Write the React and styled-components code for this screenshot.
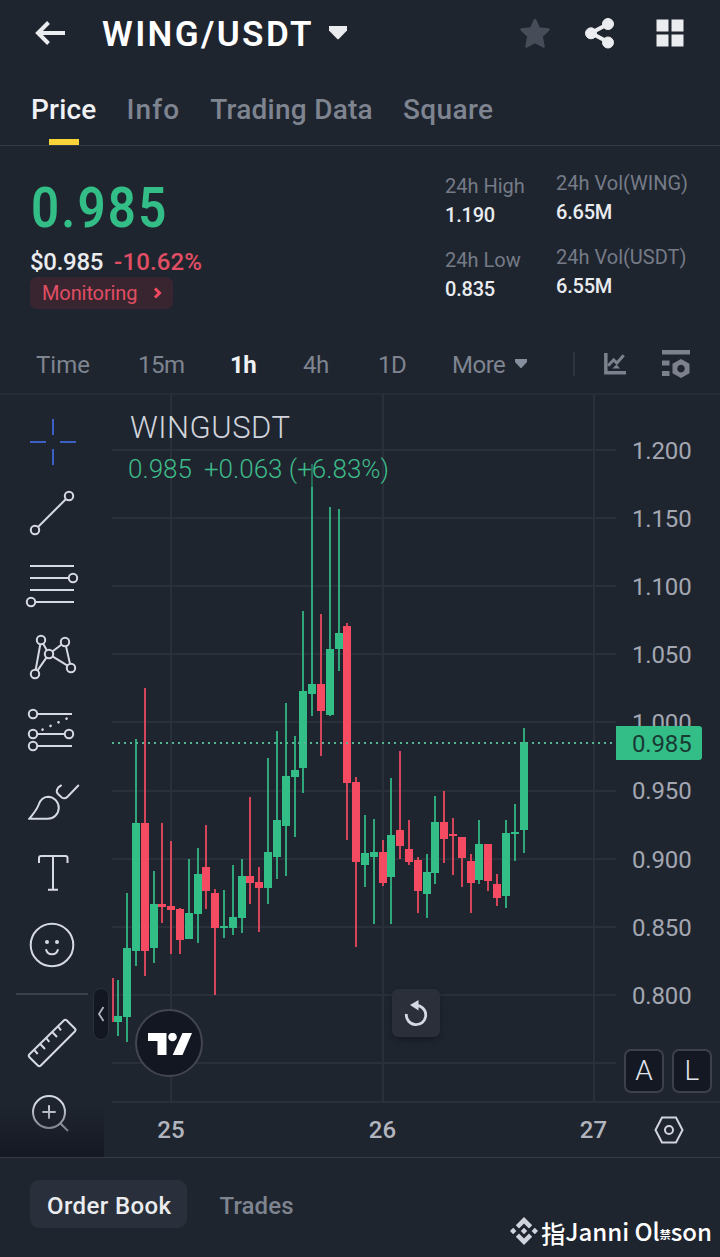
import React from "react";
import styled, { createGlobalStyle } from "styled-components";

const UP = "#34be87";
const DOWN = "#f44b62";

// [x, high, low, body top, body bottom, rising]
const candles = [
  [113, 978, 1022, 1021, 1022, 0],
  [118, 980, 1036, 1016, 1022, 1],
  [127, 893, 1042, 948, 1017, 1],
  [136, 739, 966, 823, 951, 1],
  [145, 688, 976, 823, 951, 0],
  [154, 871, 963, 904, 948, 1],
  [162, 823, 923, 904, 907, 0],
  [171, 841, 954, 906, 910, 0],
  [180, 908, 954, 909, 940, 0],
  [189, 859, 939, 913, 939, 1],
  [198, 848, 943, 874, 914, 1],
  [206, 825, 909, 867, 891, 0],
  [215, 889, 995, 893, 928, 0],
  [224, 890, 938, 926, 928, 1],
  [233, 865, 935, 917, 928, 1],
  [242, 859, 933, 876, 918, 1],
  [250, 797, 904, 876, 883, 0],
  [259, 867, 932, 882, 888, 0],
  [268, 758, 904, 852, 888, 1],
  [277, 731, 879, 820, 857, 1],
  [286, 703, 876, 776, 826, 1],
  [295, 736, 837, 770, 777, 1],
  [303, 611, 793, 691, 768, 1],
  [312, 487, 716, 684, 694, 1],
  [321, 614, 756, 684, 711, 0],
  [330, 507, 716, 649, 715, 1],
  [339, 509, 671, 633, 649, 1],
  [347, 623, 840, 626, 783, 0],
  [356, 777, 947, 782, 862, 0],
  [365, 815, 887, 853, 865, 1],
  [374, 819, 924, 852, 857, 1],
  [383, 840, 886, 852, 883, 0],
  [391, 778, 924, 835, 877, 1],
  [400, 751, 859, 830, 846, 0],
  [409, 820, 865, 849, 862, 0],
  [418, 857, 913, 860, 891, 0],
  [427, 854, 918, 872, 894, 1],
  [435, 796, 884, 822, 873, 1],
  [444, 791, 863, 822, 839, 0],
  [453, 818, 875, 834, 836, 0],
  [462, 837, 887, 837, 858, 0],
  [471, 854, 913, 861, 883, 0],
  [479, 820, 884, 844, 880, 1],
  [488, 844, 891, 844, 881, 0],
  [497, 874, 906, 884, 898, 0],
  [506, 820, 908, 833, 896, 1],
  [515, 804, 861, 832, 834, 1],
  [524, 728, 853, 742, 830, 1],
];

const gridRows = [450, 518, 586, 654, 722, 791, 859, 927, 995, 1063];
const gridCols = [171, 383, 594];
const prices = ["1.200", "1.150", "1.100", "1.050", "1.000", "0.950", "0.900", "0.850", "0.800"];

const tools = [
  {
    id: "cross",
    color: "#3c5fc4",
    art: <path d="M14 36H30M44 36H60M37 13V29M37 43V59" />,
  },
  {
    id: "trend",
    art: (
      <>
        <circle cx="53" cy="18" r="4.2" />
        <circle cx="19" cy="52" r="4.2" />
        <path d="M22 49L50 21" />
      </>
    ),
  },
  {
    id: "fib",
    art: (
      <>
        <path d="M14 16H58M14 28H53M14 40H58M19 52H58" />
        <circle cx="57" cy="28" r="4.2" />
        <circle cx="15" cy="52" r="4.2" />
      </>
    ),
  },
  {
    id: "pattern",
    art: (
      <>
        <circle cx="25" cy="18" r="4.2" />
        <circle cx="49" cy="20" r="4.2" />
        <circle cx="33" cy="32" r="4.2" />
        <circle cx="55" cy="46" r="4.2" />
        <circle cx="19" cy="52" r="4.2" />
        <path d="M27 21.6L31 28.4M36.4 29.5L45.6 22.5M50 24.1L54 41.9M36.5 34.3L51.5 43.7M30.6 35.4L21.4 48.6M24.3 22.2L19.7 47.8" />
      </>
    ),
  },
  {
    id: "forecast",
    art: (
      <>
        <circle cx="17" cy="20" r="4.2" />
        <circle cx="17" cy="40" r="4.2" />
        <circle cx="17" cy="52" r="4.2" />
        <circle cx="53" cy="40" r="4.2" />
        <path d="M21 20H56M21 40H49M21 52H56" />
        <path d="M26.5 35.6L53 23.5" strokeDasharray="0.1 8.7" strokeLinecap="round" strokeWidth="2.6" />
      </>
    ),
  },
  {
    id: "brush",
    art: (
      <path
        d="M13 52.7H31.5A11 11 0 1 0 32 30.7C26.5 31 24 34.5 22.5 39C20.5 44.5 17 48 13.5 52.5M45 19.5C41 21.5 39.500 25.500 42 28L45.500 31.200C48 33.200 49.500 32.700 51.500 30.700L62.300 19.500"
        strokeLinecap="round"
      />
    ),
  },
  {
    id: "text",
    art: <path d="M23 25V20Q23 18 25 18H49.5Q51.5 18 51.5 20V25M37 18V51.7M32 51.7H42" />,
  },
  {
    id: "smile",
    art: (
      <>
        <circle cx="36" cy="35" r="21.3" />
        <circle cx="31" cy="32" r="2" fill="#d6d9e1" stroke="none" />
        <circle cx="41" cy="32" r="2" fill="#d6d9e1" stroke="none" />
        <path d="M30 39.3Q31 44.3 36 44.3Q41 44.3 42 39.3" />
      </>
    ),
  },
];

const lowerTools = [
  {
    id: "ruler",
    art: (
      <path
        d="M47.8 14.5Q49.3 13 50.8 14.5L58.8 22.5Q60.3 24 58.8 25.5L24.8 59.5Q23.3 61 21.8 59.5L13.500 51.200Q12 49.700 13.500 48.200ZM18 43.700L21.700 48M24 37.700L29 43M30 31.700L33.300 36M36 25.700L41 31M41.700 20L45 24.300"
        strokeLinejoin="round"
      />
    ),
  },
  {
    id: "zoom",
    art: (
      <>
        <circle cx="33" cy="34" r="16" />
        <path d="M26.3 34H39.7M33 27.3V40.7M44.5 45.5L52 53" />
      </>
    ),
  },
];

function Tool({ item }) {
  return (
    <ToolButton aria-label={item.id} $color={item.color}>
      <svg width="72" height="72" viewBox="0 0 72 72" fill="none" stroke="currentColor" strokeWidth="2">
        {item.art}
      </svg>
    </ToolButton>
  );
}

function Header() {
  return (
    <HeaderBar>
      <svg width="32" height="26" viewBox="0 0 32 26" fill="none" stroke="#eaecef" strokeWidth="4">
        <path d="M14.5 2.5L4 13L14.5 23.5M3 13H31" />
      </svg>
      <Pair>WING/USDT</Pair>
      <svg width="20" height="16" viewBox="0 0 20 16" fill="#eaecef">
        <path d="M1 1H19V5.5L10.5 14.3H9.5L1 5.5Z" />
      </svg>
      <HeaderActions>
        <svg width="32" height="32" viewBox="0 0 32 32" fill="#474d58" stroke="#474d58" strokeWidth="2.5" strokeLinejoin="round">
          <path d="M16 3L20 11.5L29.5 12.5L22.6 19.2L24.5 29.5L16 25L7.5 29.5L9.4 19.2L2.5 12.5L12 11.5Z" />
        </svg>
        <svg width="30" height="32" viewBox="0 0 30 32" fill="#eaecef" stroke="#eaecef">
          <path d="M24 7L7 16L24 25" fill="none" strokeWidth="4" />
          <circle cx="24" cy="7" r="5.5" />
          <circle cx="7" cy="16.3" r="5.5" />
          <circle cx="24" cy="25.5" r="5.5" />
        </svg>
        <svg width="28" height="28" viewBox="0 0 28 28" fill="#eaecef">
          <path d="M.5 .5H12.5V12.5H.5ZM15.5 .5H27.5V12.5H15.5ZM.5 15.5H12.5V27.5H.5ZM15.5 15.5H27.5V27.5H15.5Z" />
        </svg>
      </HeaderActions>
    </HeaderBar>
  );
}

function Summary() {
  return (
    <SummaryBox>
      <PriceColumn>
        <LastPrice>0.985</LastPrice>
        <SubPrice>
          <span>$0.985</span>
          <Change>-10.62%</Change>
        </SubPrice>
        <Badge>
          Monitoring
          <svg width="10" height="14" viewBox="0 0 10 14" fill="none" stroke={DOWN} strokeWidth="3">
            <path d="M2 2.5L6.5 7L2 11.5" />
          </svg>
        </Badge>
      </PriceColumn>
      <StatColumn $top={28} $width={111}>
        <StatLabel>24h High</StatLabel>
        <StatValue>1.190</StatValue>
        <StatLabel>24h Low</StatLabel>
        <StatValue>0.835</StatValue>
      </StatColumn>
      <StatColumn $top={25} $width={164}>
        <StatLabel>24h Vol(WING)</StatLabel>
        <StatValue>6.65M</StatValue>
        <StatLabel>24h Vol(USDT)</StatLabel>
        <StatValue>6.55M</StatValue>
      </StatColumn>
    </SummaryBox>
  );
}

function Intervals() {
  return (
    <IntervalBar>
      <Interval $w={102} $ls={0}>Time</Interval>
      <Interval $w={92}>15m</Interval>
      <Interval $w={73} $active>1h</Interval>
      <Interval $w={75}>4h</Interval>
      <Interval $w={74}>1D</Interval>
      <Interval $w={121}>
        More
        <svg width="14" height="12" viewBox="0 0 14 12" fill="#848e9c">
          <path d="M1 0H13V3L7.5 9H6.5L1 3Z" />
        </svg>
      </Interval>
      <Split />
      <svg width="22" height="22" viewBox="0 0 24 24" fill="none" stroke="#7c818d" strokeWidth="3.8">
        <path d="M2 0V21.500H24" />
        <path d="M4.500 14L10.500 7.500L14 11L21.500 2.500" strokeWidth="3.200" />
        <path d="M9 17L13.500 12.500L17.500 17Z" fill="#7c818d" stroke="none" />
      </svg>
      <SettingsIcon width="30" height="30" viewBox="0 0 30 30" fill="#7c818d">
        <path d="M1 1H29V5.5H1ZM1 11.5H8.5V16.5H1ZM1 22H8.5V27H1Z" />
        <path fillRule="evenodd" d="M20 10L28.5 14.8V24.2L20 29L11.5 24.2V14.8ZM20 15.8A3.8 3.8 0 1 0 20.01 15.8Z" />
      </SettingsIcon>
    </IntervalBar>
  );
}

function Chart() {
  return (
    <Plot>
      <svg width="616" height="708" viewBox="104 395 616 708" shapeRendering="crispEdges">
        <g fill="#2a303a">
          {gridRows.map((y) => (
            <rect key={y} x="112" y={y - 1} width="504" height="2" />
          ))}
          {gridCols.map((x) => (
            <rect key={x} x={x - 1} y="395" width="2" height="707" />
          ))}
          <rect x="112" y="1101" width="608" height="2" />
        </g>
        {candles.map(([x, high, low, top, bottom, rising], i) => (
          <g key={x} fill={rising ? UP : DOWN}>
            <rect x={x - 1} y={high} width="2" height={low - high} opacity="0.85" />
            {i > 0 && <rect x={x - 4} y={top} width="8" height={bottom - top} />}
          </g>
        ))}
        <path d="M112 743H616" stroke="#54b690" strokeWidth="2" strokeDasharray="2 4" />
        <rect x="311" y="464" width="2" height="23" fill={UP} opacity="0.45" />
      </svg>
      <Legend>
        <Symbol>WINGUSDT</Symbol>
        <Quote>
          <span>0.985</span>
          <span>+0.063 (+6.83%)</span>
        </Quote>
      </Legend>
      <PriceAxis>
        {prices.map((price) => (
          <PriceTick key={price}>{price}</PriceTick>
        ))}
      </PriceAxis>
      <PriceTag>0.985</PriceTag>
      <ScaleModes>
        <ScaleMode>A</ScaleMode>
        <ScaleMode>L</ScaleMode>
      </ScaleModes>
      <ResetButton aria-label="reset">
        <svg width="26" height="28" viewBox="0 0 26 28">
          <path d="M3.4 15A9.7 9.7 0 1 0 13 6.3" fill="none" stroke="#d6d9e1" strokeWidth="2.8" />
          <path d="M7 6L15.5 1V11.500Z" fill="#d6d9e1" />
        </svg>
      </ResetButton>
      <Brand>
        <svg width="44" height="22" viewBox="0 0 44 22" fill="#fff">
          <path d="M0 0H18.5V22H9.5V8H0ZM34.5 0H44L34.5 22H24.7Z" />
          <circle cx="24.5" cy="4" r="4.3" />
        </svg>
      </Brand>
      <Collapse>
        <svg width="8" height="16" viewBox="0 0 8 16" fill="none" stroke="#b2b5be" strokeWidth="1.8">
          <path d="M6.5 1L2 8L6.5 15" />
        </svg>
      </Collapse>
    </Plot>
  );
}

function App() {
  return (
    <Page>
      <GlobalStyle />
      <Header />
      <Tabs>
        <Tab $active $ls={0.2}>Price</Tab>
        <Tab $ls={1.1}>Info</Tab>
        <Tab $ls={0.25}>Trading Data</Tab>
        <Tab $ls={0.4}>Square</Tab>
      </Tabs>
      <Summary />
      <Intervals />
      <ChartArea>
        <ToolRail>
          {tools.map((item) => (
            <Tool key={item.id} item={item} />
          ))}
          <RailDivider />
          {lowerTools.map((item) => (
            <Tool key={item.id} item={item} />
          ))}
          <RailFade />
        </ToolRail>
        <ChartColumn>
          <Chart />
          <TimeAxis>
            <TimeTick $w={134}>25</TimeTick>
            <TimeTick $w={289}>26</TimeTick>
            <TimeTick $w={133}>27</TimeTick>
            <AxisSettings width="30" height="28" viewBox="0 0 30 28" fill="none" stroke="#d1d4dc" strokeWidth="2">
              <path d="M1.5 14L8 1.5H22L28.5 14L22 26.5H8Z" />
              <circle cx="15" cy="14" r="4" />
            </AxisSettings>
          </TimeAxis>
        </ChartColumn>
      </ChartArea>
      <Footer>
        <FooterTab $active>Order Book</FooterTab>
        <FooterTab>Trades</FooterTab>
        <Watermark>
          <svg width="28" height="28" viewBox="0 0 28 28" fill="#d0d4dc">
            <path d="M14 0L22.2 8.2L19 11.4L14 6.4L9 11.4L5.8 8.2ZM14 28L5.8 19.8L9 16.6L14 21.6L19 16.6L22.2 19.8ZM3.2 10.8L6.4 14L3.2 17.2L0 14ZM24.8 10.8L28 14L24.8 17.2L21.6 14ZM14 10.8L17.2 14L14 17.2L10.8 14Z" />
          </svg>
          <Hanzi>指</Hanzi>
          <span>Janni Ol</span>
          <TinyHanzi>禁</TinyHanzi>
          <span>son</span>
        </Watermark>
      </Footer>
    </Page>
  );
}

export default App;

const GlobalStyle = createGlobalStyle`
  * {
    box-sizing: border-box;
  }

  body {
    margin: 0;
    background: #1f252f;
  }

  svg {
    display: block;
    flex-shrink: 0;
  }

  button {
    margin: 0;
    padding: 0;
    border: none;
    background: none;
    font: inherit;
  }
`;

const Page = styled.div`
  display: flex;
  flex-direction: column;
  width: 720px;
  height: 1257px;
  overflow: hidden;
  background: #1f252f;
  color: #eaecef;
  font-family: Roboto, "Liberation Sans", sans-serif;
`;

const HeaderBar = styled.header`
  display: flex;
  align-items: center;
  height: 66px;
  padding: 0 36px 0 34px;
`;

const Pair = styled.h1`
  width: 226px;
  margin: 4px 0 0 36px;
  font-size: 35px;
  line-height: 40px;
  font-weight: 600;
  letter-spacing: 2.4px;
  white-space: nowrap;
  color: #fff;
`;

const HeaderActions = styled.div`
  display: flex;
  align-items: center;
  margin-left: auto;

  svg:nth-child(2) {
    margin-left: 33px;
  }

  svg:nth-child(3) {
    margin-left: 42px;
  }
`;

const Tabs = styled.nav`
  display: flex;
  gap: 30px;
  height: 80px;
  padding: 0 31px;
  border-bottom: 1px solid #343a45;
`;

const Tab = styled.div`
  display: flex;
  justify-content: center;
  position: relative;
  height: 79px;
  padding-top: 27px;
  font-size: 28px;
  line-height: 33px;
  font-weight: 500;
  letter-spacing: ${({ $ls }) => $ls}px;
  white-space: nowrap;
  color: ${({ $active }) => ($active ? "#f0f1f4" : "#7e8490")};

  &::after {
    content: "";
    display: ${({ $active }) => ($active ? "block" : "none")};
    position: absolute;
    bottom: 0;
    width: 30px;
    height: 6px;
    background: #f8d33a;
  }
`;

const SummaryBox = styled.section`
  display: flex;
  height: 188px;
  padding-left: 30px;
`;

const PriceColumn = styled.div`
  width: 415px;
  padding-top: 32px;
`;

const LastPrice = styled.div`
  padding-left: 1px;
  font-size: 56px;
  line-height: 60px;
  font-weight: 600;
  letter-spacing: 2.5px;
  transform: scaleX(0.88);
  transform-origin: left;
  color: ${UP};
`;

const SubPrice = styled.div`
  display: flex;
  gap: 11px;
  margin-top: 10px;
  font-size: 24px;
  line-height: 29px;
  font-weight: 500;
  letter-spacing: -0.3px;
`;

const Change = styled.span`
  color: #e04e64;
  letter-spacing: 0.15px;
`;

const Badge = styled.div`
  display: flex;
  align-items: center;
  justify-content: space-between;
  width: 143px;
  height: 32px;
  padding: 0 10px 0 12px;
  border-radius: 7px;
  background: #39252f;
  font-size: 20px;
  letter-spacing: -0.1px;
  color: #e04e64;
`;

const StatColumn = styled.div`
  width: ${({ $width }) => $width}px;
  padding-top: ${({ $top }) => $top}px;
  white-space: nowrap;
`;

const StatLabel = styled.div`
  font-size: 20px;
  line-height: 24px;
  color: #757b87;
`;

const StatValue = styled.div`
  margin: 5px 0 21px;
  font-size: 20px;
  line-height: 24px;
  font-weight: 500;
  letter-spacing: -0.2px;
  color: #eaecef;
`;

const IntervalBar = styled.div`
  display: flex;
  align-items: center;
  height: 61px;
  padding-left: 36px;
  border-bottom: 2px solid #262c36;
`;

const Interval = styled.div`
  display: flex;
  align-items: center;
  gap: 9px;
  width: ${({ $w }) => $w}px;
  padding-top: 3px;
  font-size: 24px;
  letter-spacing: ${({ $ls = -0.5 }) => $ls}px;
  font-weight: ${({ $active }) => ($active ? 700 : 400)};
  color: ${({ $active }) => ($active ? "#f0f1f4" : "#7e8490")};
`;

const Split = styled.div`
  width: 2px;
  height: 24px;
  margin-right: 29px;
  background: #2f3540;
`;

const SettingsIcon = styled.svg`
  margin-left: 35px;
`;

const ChartArea = styled.main`
  display: flex;
  height: 762px;
`;

const ToolRail = styled.aside`
  position: relative;
  width: 104px;
  height: 762px;
  padding: 11px 16px 0;
  overflow: hidden;
`;

const ToolButton = styled.button`
  display: block;
  width: 72px;
  height: 72px;
  color: ${({ $color }) => $color || "#d6d9e1"};
`;

const RailDivider = styled.div`
  height: 2px;
  margin: 11px 0;
  background: #3b404b;
`;

const RailFade = styled.div`
  position: absolute;
  left: 0;
  right: 0;
  bottom: 0;
  height: 54px;
  background: linear-gradient(rgba(20, 24, 35, 0), rgba(20, 24, 35, 0.95));
`;

const ChartColumn = styled.div`
  width: 616px;
`;

const Plot = styled.div`
  position: relative;
  height: 708px;
`;

const Legend = styled.div`
  position: absolute;
  top: 14px;
  left: 24px;
  white-space: nowrap;
`;

const Symbol = styled.div`
  padding-left: 2px;
  font-size: 31px;
  line-height: 38px;
  font-weight: 300;
  letter-spacing: 0.5px;
  color: #d1d4dc;
`;

const Quote = styled.div`
  display: flex;
  gap: 12px;
  margin-top: 6px;
  font-size: 26px;
  line-height: 32px;
  font-weight: 300;
  color: #3dbb8a;
`;

const PriceAxis = styled.div`
  position: absolute;
  top: 22px;
  left: 528px;
`;

const PriceTick = styled.div`
  height: 68.1px;
  font-size: 24px;
  line-height: 68px;
  letter-spacing: -0.15px;
  color: #a3a7b1;
`;

const PriceTag = styled.div`
  position: absolute;
  top: 331px;
  left: 512px;
  width: 86px;
  height: 34px;
  padding-left: 16px;
  border-radius: 0 3px 3px 0;
  background: ${UP};
  font-size: 24px;
  line-height: 36px;
  letter-spacing: -0.15px;
  color: #183a33;
`;

const ScaleModes = styled.div`
  position: absolute;
  top: 654px;
  right: 8px;
  display: flex;
  gap: 8px;
`;

const ScaleMode = styled.button`
  width: 40px;
  height: 44px;
  border: 2px solid #3c404b;
  border-radius: 7px;
  background: #141822;
  font-size: 28px;
  font-weight: 300;
  line-height: 38px;
  color: #e0e3eb;
`;

const ResetButton = styled.button`
  position: absolute;
  top: 594px;
  left: 288px;
  display: flex;
  align-items: center;
  justify-content: center;
  width: 48px;
  height: 48px;
  border-radius: 6px;
  background: #2a2f3a;
  box-shadow: 0 3px 6px rgba(0, 0, 0, 0.3);
`;

const Brand = styled.div`
  position: absolute;
  top: 614px;
  left: 31px;
  display: flex;
  align-items: center;
  justify-content: center;
  width: 68px;
  height: 68px;
  padding: 2px 0 0 1px;
  border: 2px solid #434651;
  border-radius: 50%;
  background: #131722;
`;

const Collapse = styled.div`
  position: absolute;
  top: 593px;
  left: -11px;
  display: flex;
  align-items: center;
  justify-content: center;
  width: 16px;
  height: 52px;
  border: 1px solid #2a2f3a;
  border-radius: 8px;
  background: #131722;
`;

const TimeAxis = styled.div`
  display: flex;
  align-items: center;
  height: 54px;
`;

const TimeTick = styled.div`
  width: ${({ $w }) => $w}px;
  text-align: center;
  font-size: 24px;
  font-weight: 500;
  color: #b2b5be;
`;

const AxisSettings = styled.svg`
  margin-left: -6px;
`;

const Footer = styled.footer`
  position: relative;
  display: flex;
  align-items: flex-start;
  gap: 16px;
  height: 100px;
  padding: 22px 30px 0;
  border-top: 1px solid #343a45;
`;

const FooterTab = styled.div`
  height: 48px;
  padding: 0 15px 0 17px;
  border-radius: 9px;
  background: ${({ $active }) => ($active ? "#2a303b" : "none")};
  font-size: 24px;
  line-height: 52px;
  font-weight: 500;
  letter-spacing: ${({ $active }) => ($active ? 0.4 : 0.1)}px;
  color: ${({ $active }) => ($active ? "#eaecef" : "#7e8490")};
`;

const Watermark = styled.div`
  position: absolute;
  right: 8px;
  bottom: 7px;
  display: flex;
  align-items: center;
  font-family: "Noto Sans CJK SC", sans-serif;
  font-size: 24px;
  line-height: 32px;
  font-weight: 500;
  white-space: pre;
  color: #fff;
`;

const Hanzi = styled.span`
  margin: 4px 0 0 3px;
`;

const TinyHanzi = styled.span`
  margin-top: 6px;
  font-size: 11px;
  font-weight: 700;
`;
